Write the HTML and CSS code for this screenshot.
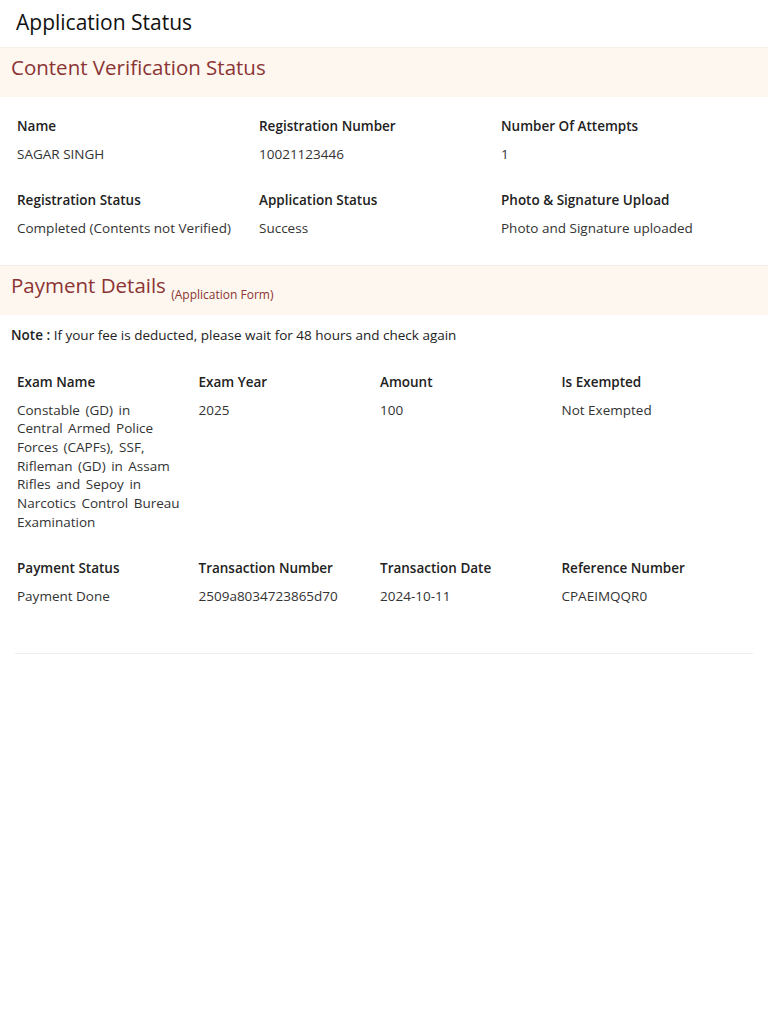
FILE: index.html
```html
<!DOCTYPE html>
<html lang="en">
<head>
    <meta charset="UTF-8">
    <meta name="viewport" content="width=device-width, initial-scale=1.0">
    <title>Application Status</title>
    <link rel="stylesheet" href="styles.css">
</head>
<body>
    <h1 class="page-title">Application Status</h1>

    <div class="section-head">
        <h2>Content Verification Status</h2>
    </div>
    <div class="info-grid cols-3">
        <div class="field">
            <span class="label">Name</span>
            <span class="value">SAGAR SINGH</span>
        </div>
        <div class="field">
            <span class="label">Registration Number</span>
            <span class="value">10021123446</span>
        </div>
        <div class="field">
            <span class="label">Number Of Attempts</span>
            <span class="value">1</span>
        </div>
        <div class="field">
            <span class="label">Registration Status</span>
            <span class="value">Completed (Contents not Verified)</span>
        </div>
        <div class="field">
            <span class="label">Application Status</span>
            <span class="value">Success</span>
        </div>
        <div class="field">
            <span class="label">Photo &amp; Signature Upload</span>
            <span class="value">Photo and Signature uploaded</span>
        </div>
    </div>

    <div class="section-head">
        <h2>Payment Details <small>(Application Form)</small></h2>
    </div>
    <p class="note"><b>Note :</b> If your fee is deducted, please wait for 48 hours and check again</p>
    <div class="info-grid cols-4">
        <div class="field">
            <span class="label">Exam Name</span>
            <span class="value exam-name">Constable (GD) in Central Armed Police Forces (CAPFs), SSF, Rifleman (GD) in Assam Rifles and Sepoy in Narcotics Control Bureau Examination</span>
        </div>
        <div class="field">
            <span class="label">Exam Year</span>
            <span class="value">2025</span>
        </div>
        <div class="field">
            <span class="label">Amount</span>
            <span class="value">100</span>
        </div>
        <div class="field">
            <span class="label">Is Exempted</span>
            <span class="value">Not Exempted</span>
        </div>
        <div class="field">
            <span class="label">Payment Status</span>
            <span class="value">Payment Done</span>
        </div>
        <div class="field">
            <span class="label">Transaction Number</span>
            <span class="value">2509a8034723865d70</span>
        </div>
        <div class="field">
            <span class="label">Transaction Date</span>
            <span class="value">2024-10-11</span>
        </div>
        <div class="field">
            <span class="label">Reference Number</span>
            <span class="value">CPAEIMQQR0</span>
        </div>
    </div>
    <hr class="divider">
</body>
</html>
```

FILE: styles.css
```css
body {
    margin: 0;
    font-family: 'Open Sans', 'Lato', sans-serif;
    color: #222;
    background: #fff;
}
.page-title {
    margin: 0;
    height: 47px;
    box-sizing: border-box;
    padding: 8px 16px 0;
    font-size: 21px;
    font-weight: 500;
    color: #111;
}
.section-head {
    background: #fef7ef;
    height: 50px;
    box-sizing: border-box;
    padding: 5px 11px 0;
    border-top: 1px solid #f6efe8;
}
.section-head h2 {
    margin: 0;
    font-size: 20.5px;
    font-weight: 500;
    color: #8b3434;
}
.section-head small {
    font-size: 12px;
    position: relative;
    top: 6px;
}
.info-grid {
    display: grid;
    padding: 0 17px;
}
.cols-3 {
    grid-template-columns: repeat(3, 242px);
    padding-top: 20px;
    padding-bottom: 27px;
    row-gap: 28px;
}
.cols-4 {
    grid-template-columns: repeat(4, 181.5px);
    padding-top: 28px;
    padding-bottom: 47px;
    row-gap: 28px;
}
.field {
    display: flex;
    flex-direction: column;
    gap: 9px;
    font-size: 13.5px;
    line-height: 18.7px;
    padding-right: 16px;
}
.label {
    font-weight: 600;
    color: #222;
}
.value {
    color: #333;
}
.exam-name {
    max-width: 162.75px;
    word-spacing: 2px;
}
.note {
    margin: 0;
    padding: 11px 11px 0;
    font-size: 13.5px;
    line-height: 19px;
    color: #222;
}
.note b {
    font-weight: 600;
}
.divider {
    margin: 0 15px;
    border: none;
    border-top: 1px solid #ececec;
}
```
